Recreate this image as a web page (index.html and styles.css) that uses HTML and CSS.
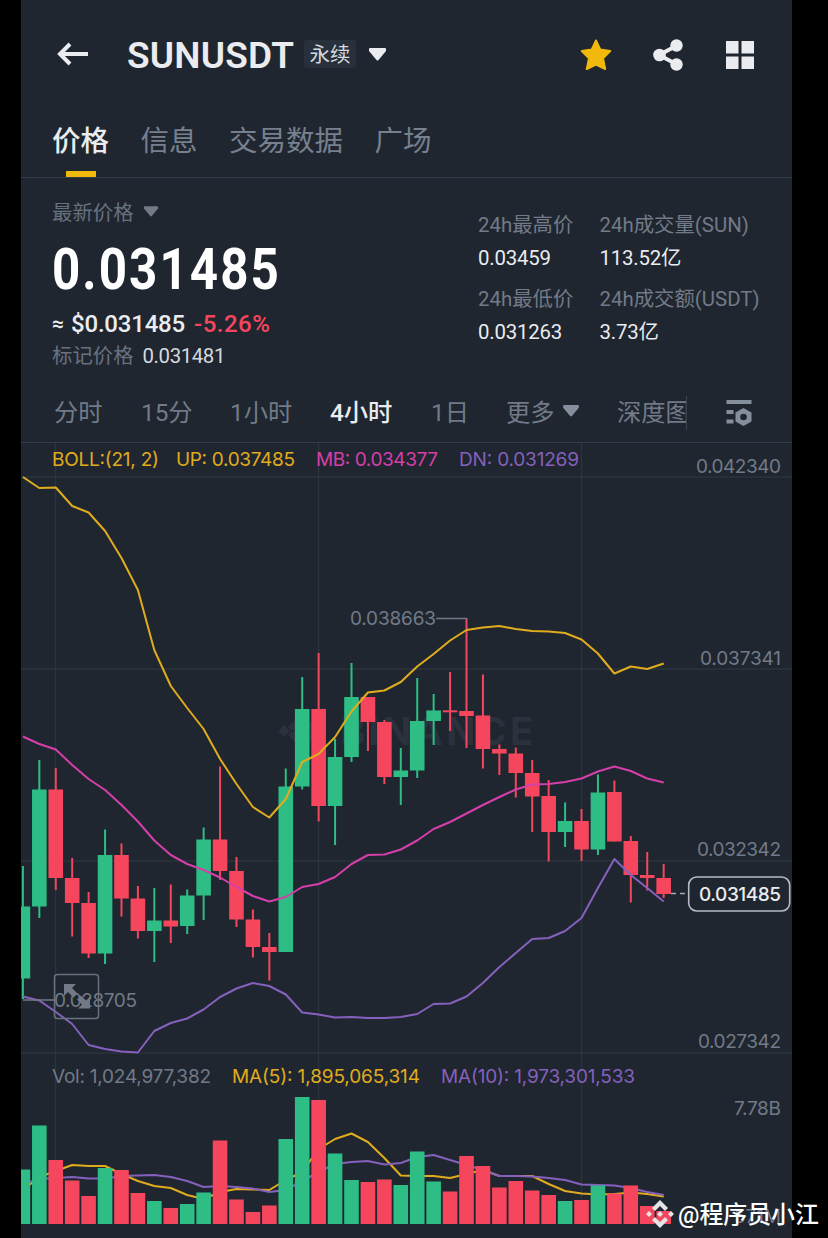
FILE: index.html
```html
<!DOCTYPE html>
<html lang="zh-CN">
<head>
  <meta charset="UTF-8">
  <meta name="viewport" content="width=device-width, initial-scale=1.0">
  <title>SUNUSDT 永续</title>
  <link rel="stylesheet" href="styles.css">
</head>
<body>
  <main class="app">
    <header class="topbar">
      <svg class="back" width="32" height="24" viewBox="0 0 32 24"><path d="M31 12H3M13 2L3 12L13 22" fill="none" stroke="#eaecef" stroke-width="4"/></svg>
      <h1 class="symbol">SUNUSDT</h1>
      <span class="badge">永续</span>
      <svg class="caret" width="17" height="13" viewBox="0 0 17 13"><path d="M1 0H16Q17 0 17 1V3L9.5 12Q8.5 13 7.5 12L0 3V1Q0 0 1 0Z" fill="#eaecef"/></svg>
      <div class="actions">
        <svg width="32" height="32" viewBox="0 0 32 32"><path d="M16 1.5L20.3 10.6L30.2 12L23 19.2L25.2 30L16 25.6L6.8 30L9 19.2L1.8 12L11.7 10.6Z" fill="#f0b90b" stroke="#f0b90b" stroke-width="2" stroke-linejoin="round"/></svg>
        <svg width="32" height="32" viewBox="0 0 32 32"><path d="M7 16L25 6.500M7 16L25 25.500" stroke="#eaecef" stroke-width="4"/><circle cx="7.500" cy="16" r="6.300" fill="#eaecef"/><circle cx="24.500" cy="6.500" r="6.200" fill="#eaecef"/><circle cx="24.500" cy="25.500" r="6.200" fill="#eaecef"/></svg>
        <svg width="28" height="28" viewBox="0 0 28 28"><path d="M0 0H12.500V12.500H0ZM15.500 0H28V12.500H15.500ZM0 15.500H12.500V28H0ZM15.500 15.500H28V28H15.500Z" fill="#eaecef"/></svg>
      </div>
    </header>

    <nav class="tabs">
      <a class="tab active">价格</a>
      <a class="tab">信息</a>
      <a class="tab">交易数据</a>
      <a class="tab">广场</a>
    </nav>

    <section class="summary">
      <div class="price-box">
        <div class="price-type">最新价格 <svg width="14" height="11" viewBox="0 0 17 13"><path d="M1 0H16Q17 0 17 1V3L9.5 12Q8.5 13 7.5 12L0 3V1Q0 0 1 0Z" fill="#727a88"/></svg></div>
        <div class="price">0.031485</div>
        <div class="fiat"><span class="approx">≈</span><span class="usd">$0.031485</span><span class="change">-5.26%</span></div>
        <div class="mark"><span>标记价格</span><b>0.031481</b></div>
      </div>
      <dl class="stats">
        <div><dt>24h最高价</dt><dd>0.03459</dd></div>
        <div><dt>24h成交量(SUN)</dt><dd>113.52亿</dd></div>
        <div><dt>24h最低价</dt><dd>0.031263</dd></div>
        <div><dt>24h成交额(USDT)</dt><dd>3.73亿</dd></div>
      </dl>
    </section>

    <nav class="periods">
      <a class="p-line">分时</a>
      <a class="p-15m">15分</a>
      <a class="p-1h">1小时</a>
      <a class="p-4h active">4小时</a>
      <a class="p-1d">1日</a>
      <a class="p-more">更多 <svg width="16" height="12" viewBox="0 0 17 13"><path d="M1 0H16Q17 0 17 1V3L9.5 12Q8.5 13 7.5 12L0 3V1Q0 0 1 0Z" fill="#848e9c"/></svg></a>
      <a class="p-depth">深度图</a>
      <svg class="settings" width="26" height="26" viewBox="0 0 26 26"><path d="M0.500 0H25.500V4H0.500ZM0.500 10H7.500V14H0.500ZM0.500 19.500H7.500V23.500H0.500Z" fill="#848e9c"/><path fill-rule="evenodd" d="M17.500 8L25.500 12.500V21.500L17.500 26L9.500 21.500V12.500ZM17.500 13.700A3.300 3.300 0 1 0 17.500 20.300A3.300 3.300 0 1 0 17.500 13.700Z" fill="#848e9c"/></svg>
    </nav>

    <svg class="chart" id="chart" width="771" height="795" viewBox="21 443 771 795"></svg>
  </main>

  <div class="author">
    <svg width="28" height="28" viewBox="0 0 28 28"><path d="M14 0L22 8L19 11L14 6L9 11L6 8ZM14 28L22 20L19 17L14 22L9 17L6 20ZM14 11L17 14L14 17L11 14ZM3 11L6 14L3 17L0 14ZM25 11L28 14L25 17L22 14Z" fill="#e5e5e8"/></svg>
    <span>@程序员小江</span>
  </div>

  <script src="chart.js"></script>
</body>
</html>
```
FILE: styles.css
```css
body {
  margin: 0;
  background-color: #000;
  font-family: Roboto, 'Noto Sans CJK SC', sans-serif;
  position: relative;
  width: 828px;
  height: 1238px;
  overflow: hidden;
}

.app {
  width: 770.5px;
  height: 1238px;
  margin-left: 21px;
  background-color: #1f262f;
  overflow: hidden;
}

.topbar {
  display: flex;
  align-items: center;
  height: 108px;
  padding: 0 38px 0 36px;
}

.symbol {
  margin: 4px 0 0 38px;
  width: 177px;
  font-size: 37px;
  line-height: 40px;
  font-weight: 600;
  letter-spacing: 0.2px;
  color: #eaecef;
}

.badge {
  width: 52px;
  height: 28px;
  line-height: 30px;
  text-align: center;
  font-size: 20.5px;
  color: #d5d9df;
  background-color: #27303b;
  border-radius: 3px;
}

.caret {
  margin-left: 13px;
}

.actions {
  display: flex;
  align-items: center;
  gap: 40px;
  margin: 1px 0 0 auto;
}

.actions svg:nth-child(2) {
  margin-right: 2px;
}

.tabs {
  display: flex;
  gap: 31.5px;
  height: 69px;
  padding-left: 31px;
  border-bottom: 1px solid #333c48;
}

.tab {
  position: relative;
  font-size: 28.5px;
  line-height: 68px;
  color: #77808f;
}

.tab.active {
  color: #eaecef;
  font-weight: 500;
}

.tab.active::after {
  content: '';
  position: absolute;
  left: 14px;
  bottom: 0;
  width: 30px;
  height: 6px;
  background-color: #f0b90b;
}

.summary {
  display: flex;
  height: 206px;
  padding-left: 31px;
}

.price-box {
  width: 426px;
  padding-top: 17px;
}

.price-type {
  display: flex;
  align-items: center;
  gap: 10px;
  height: 32px;
  font-size: 20.4px;
  color: #68717f;
}

/* digits are narrow and widely spaced */
.price {
  height: 85px;
  line-height: 86px;
  font-size: 57px;
  font-weight: 700;
  letter-spacing: 2.4px;
  transform: scaleX(0.865);
  transform-origin: left;
  color: #fff;
}

.fiat {
  display: flex;
  height: 24px;
  line-height: 24px;
  font-size: 24px;
  font-weight: 500;
  color: #eaecef;
}

.approx {
  width: 19px;
  font-size: 21px;
}

.usd {
  width: 123px;
  letter-spacing: -0.2px;
}

.change {
  color: #f6465d;
  letter-spacing: 0.5px;
}

.mark {
  display: flex;
  gap: 9px;
  height: 40px;
  line-height: 41px;
  font-size: 20.4px;
  color: #68717f;
}

.mark b {
  font-weight: 400;
  letter-spacing: -0.4px;
  color: #d5d9df;
}

.stats {
  display: grid;
  grid-template-columns: 121.5px 180px;
  grid-auto-rows: 74px;
  margin: 31px 0 0;
  font-size: 20.4px;
}

.stats dt {
  line-height: 33px;
  color: #727a88;
  white-space: nowrap;
}

.stats dd {
  margin: 0;
  line-height: 33px;
  letter-spacing: -0.2px;
  color: #eaecef;
}

.periods {
  display: flex;
  align-items: center;
  height: 58px;
  padding-left: 33px;
  border-bottom: 1px solid #333c48;
  font-size: 24.3px;
  line-height: 34px;
  color: #727a88;
  white-space: nowrap;
}

.periods .active {
  color: #eaecef;
  font-weight: 500;
}

.p-line { width: 87px; }
.p-15m { width: 89px; }
.p-1h { width: 100px; }
.p-4h { width: 101px; }
.p-1d { width: 75px; }
.p-more { width: 111px; }

.p-more svg {
  margin: 0 0 4px 2px;
}

.p-depth {
  width: 69px;
  overflow: hidden;
  border-right: 1px solid #3b4450;
}

.settings {
  margin-left: 39px;
}

.chart {
  display: block;
  font-family: Inter, sans-serif;
  font-size: 19px;
}

.grid {
  stroke: #2b333e;
  stroke-width: 1.4;
}

.line {
  fill: none;
  stroke-width: 2;
  stroke-linejoin: round;
}

.watermark {
  fill: #2b323d;
  font-size: 38px;
  font-weight: 700;
}

.axis {
  fill: #727a88;
}

.last-price {
  fill: #eaecef;
  font-weight: 500;
}

.author {
  position: absolute;
  left: 646px;
  top: 1197px;
  display: flex;
  align-items: center;
  gap: 4px;
  height: 34px;
  font-size: 23.9px;
  font-weight: 500;
  color: #fff;
  white-space: nowrap;
}

.author span {
  margin-top: -4px;
}
```
FILE: chart.js
```js
const GREEN = '#2ebd85';
const RED = '#f6465d';
const GOLD = '#e0ac1e';
const PINK = '#d53fa9';
const PURPLE = '#8560bd';

const svg = document.getElementById('chart');
const xAt = i => 22.900 + i * 16.430;
let out = '';

// [up, high, low, body top, body bottom]
const candles = [
  [1, 866, 999, 906.5, 978.5], [1, 760, 918, 789.5, 906.5], [0, 768, 890, 789.5, 878],
  [0, 858, 936.5, 878, 903], [0, 892, 958, 903, 953.5], [1, 829.5, 964, 855, 953.5],
  [0, 843.5, 916.5, 855, 898.5], [0, 886, 938.5, 898.5, 931], [1, 888, 962, 920.5, 931],
  [0, 884.5, 943, 920.5, 926.5], [1, 889.5, 934, 895.5, 926], [1, 827.5, 920, 839.5, 895.5],
  [0, 766.5, 880, 839.5, 871], [0, 857, 927, 871, 919.5], [0, 909.5, 957.5, 919.5, 947],
  [0, 933, 980.5, 947, 952], [1, 768.5, 952, 786.5, 952], [1, 677, 789.5, 709, 786.5],
  [0, 653, 821.5, 709, 806], [1, 739, 845, 757, 806], [1, 663, 762, 697, 757],
  [0, 697, 751, 697, 722], [0, 720, 784, 722, 777], [1, 748, 805, 770.5, 777],
  [1, 678, 778, 721, 770.5], [1, 694, 745, 710.5, 721], [0, 672, 731, 710.3, 712.3],
  [0, 618, 748, 711, 716], [0, 674.5, 768.5, 715.5, 749], [0, 744.5, 775, 749, 753.5],
  [0, 747.5, 797.5, 753.5, 773], [0, 760, 832, 773, 796.5], [0, 780, 861.5, 796, 832],
  [1, 802.5, 847, 821, 832], [0, 809, 861, 821, 849.5], [1, 774.5, 855, 792.5, 849.5],
  [0, 780.5, 841.5, 792, 841.5], [0, 836, 902.5, 841, 875], [0, 852, 890.5, 875, 878],
  [0, 864, 898, 878, 894]
];

const volumes = [1169.5, 1125.5, 1160, 1180.5, 1196, 1168, 1170, 1193, 1201, 1208, 1204, 1192.5,
  1140.5, 1199.5, 1212, 1205.5, 1139, 1097, 1100, 1153.5, 1180, 1182, 1179.5, 1185, 1151.5,
  1181.5, 1191.5, 1156, 1166, 1187.5, 1181, 1190.5, 1195, 1201, 1200, 1185.5, 1193.5, 1185.5,
  1206, 1211];

const up = [477, 488, 487.5, 506, 512.5, 531, 558, 590, 650, 686, 708, 729, 759, 784, 807, 817.5,
  799, 762, 754, 737, 711.5, 692.5, 690.5, 682, 666.5, 654, 640.5, 630, 627.5, 626, 629, 631,
  631.5, 633, 639.5, 653.5, 673.5, 666.5, 669, 663.5];
const mb = [736.5, 744, 749.5, 765, 779, 790, 805, 821.5, 840.5, 855, 864, 870, 877.5, 887, 896,
  901.5, 897, 887, 884, 877, 864, 855, 854.5, 849.5, 840.5, 829, 822, 813.5, 805, 797, 789.5,
  784.5, 784, 782, 778.5, 771.5, 766.5, 771, 778.5, 782.5];
const dn = [996.5, 1000.5, 1012, 1024, 1045, 1049, 1051.5, 1052.5, 1031, 1023, 1018.5, 1009.5,
  997, 988.5, 983, 986, 994.5, 1012.5, 1014.5, 1017.5, 1017, 1018, 1018, 1017, 1014, 1004,
  1003.5, 996.5, 983, 967, 953, 939, 938, 931, 918, 888, 859, 875, 888, 901.5];
const ma5 = [1190, 1177, 1171, 1165, 1166, 1166, 1174, 1181, 1186, 1188, 1195, 1199, 1192, 1189,
  1189.5, 1190, 1180, 1172, 1149, 1139, 1133.5, 1142, 1158, 1175.5, 1176, 1176, 1178, 1174, 1170,
  1176, 1176, 1176, 1184, 1191, 1193.5, 1194.5, 1194, 1192.5, 1194, 1196.5];
const ma10 = [1184, 1179, 1178, 1177, 1178.5, 1178.5, 1176, 1175.5, 1175, 1177, 1181, 1187, 1186,
  1187, 1188.5, 1192, 1190, 1181, 1172, 1164, 1162, 1161, 1164.5, 1163, 1157, 1155, 1160, 1165,
  1170, 1176, 1176, 1176.5, 1178, 1180, 1184.5, 1185, 1185.5, 1188, 1192, 1195];

function line(values, color) {
  const points = values.map((y, i) => `${xAt(i).toFixed(1)},${y}`).join(' ');
  out += `<polyline class="line" stroke="${color}" points="${points}"/>`;
}

function text(x, y, width, label, color, cls) {
  out += `<text x="${x}" y="${y}" textLength="${width}" class="${cls || ''}" ${color ? `fill="${color}"` : ''}>${label}</text>`;
}

// Grid
for (const y of [477, 669, 861, 1053]) out += `<path class="grid" d="M21 ${y}H792"/>`;
for (const x of [55.5, 318.5, 581.5]) out += `<path class="grid" d="M${x} 443V1224"/>`;

// Watermark
out += '<path fill="#2b323d" d="M284 725l6 6l-6 6l-6-6zM302 713l14 14l-5 5l-9-9l-9 9l-5-5zM302 749l14-14l-5-5l-9 9l-9-9l-5 5zM320 725l6 6l-6 6l-6-6z"/>';
text(340, 745, 193, 'BINANCE', '', 'watermark');

// Volume averages run behind the bars
line(ma5, GOLD);
line(ma10, PURPLE);

candles.forEach(([rise, high, low, top, bottom], i) => {
  const x = xAt(i);
  const color = rise ? GREEN : RED;
  out += `<rect x="${x - 1}" y="${high}" width="2" height="${low - high}" fill="${color}"/>`;
  out += `<rect x="${x - 7.3}" y="${top}" width="14.600" height="${bottom - top}" fill="${color}"/>`;
  out += `<rect x="${x - 7.3}" y="${volumes[i]}" width="14.600" height="${1224 - volumes[i]}" fill="${color}"/>`;
});

line(up, GOLD);
line(mb, PINK);
line(dn, PURPLE);

// Indicator values
text(52, 466, 107, 'BOLL:(21, 2)', GOLD);
text(176, 466, 119, 'UP: 0.037485', GOLD);
text(316, 466, 122, 'MB: 0.034377', PINK);
text(459, 466, 120, 'DN: 0.031269', PURPLE);
text(52, 1083, 159, 'Vol: 1,024,977,382', '#727a88');
text(232, 1083, 188, 'MA(5): 1,895,065,314', GOLD);
text(441, 1083, 194, 'MA(10): 1,973,301,533', PURPLE);

// Axis values
text(696, 473, 85, '0.042340', '', 'axis');
text(700, 665, 81, '0.037341', '', 'axis');
text(697, 856, 84, '0.032342', '', 'axis');
text(698, 1048, 83, '0.027342', '', 'axis');
text(734, 1115, 47, '7.78B', '', 'axis');
text(734, 1223, 47, '571M', '', 'axis');

// High and low markers
out += '<path d="M436 618.500H467M23 1000H54" stroke="#727a88" stroke-width="1.400"/>';
text(350, 625, 86, '0.038663', '', 'axis');
text(54, 1007, 83, '0.028705', '', 'axis');

// Fullscreen button
out += '<rect x="54.500" y="974.500" width="44" height="44" rx="3" fill="none" stroke="#68717f" stroke-width="1.500"/>';
out += '<path d="M64 984H76L72 988L77.500 993.500L73.500 997.500L68 992L64 996ZM90 1008.500H78L82 1004.500L77 999.500L81 995.500L86 1000.500L90 996.500Z" fill="#727a88"/>';

// Last price
out += '<path d="M671 893.500H688" stroke="#a4a9b2" stroke-width="1.500" stroke-dasharray="5 4"/>';
out += '<rect x="688.700" y="877" width="101" height="34" rx="8" fill="#1f262f" stroke="#b7bcc4" stroke-width="1.600"/>';
text(699, 901, 82, '0.031485', '', 'last-price');

svg.innerHTML = out;
```
